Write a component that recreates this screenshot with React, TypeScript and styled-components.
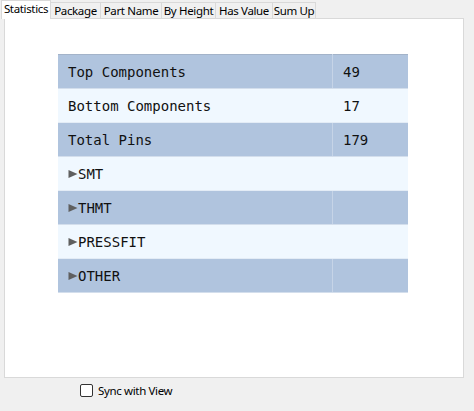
import React from "react";
import styled, { createGlobalStyle } from "styled-components";

const GlobalStyle = createGlobalStyle`
  html, body {
    margin: 0;
    padding: 0;
    background: #f0f0f0;
  }
`;

type Stat = { label: string; value?: string; group?: boolean };

const stats: Stat[] = [
    { label: "Top Components", value: "49" },
    { label: "Bottom Components", value: "17" },
    { label: "Total Pins", value: "179" },
    { label: "SMT", group: true },
    { label: "THMT", group: true },
    { label: "PRESSFIT", group: true },
    { label: "OTHER", group: true },
];

const tabs = [
    { name: "Statistics", width: 50 },
    { name: "Package", width: 51 },
    { name: "Part Name", width: 62 },
    { name: "By Height", width: 55 },
    { name: "Has Value", width: 58 },
    { name: "Sum Up", width: 44 },
];

const Style = {
    Window: styled.div`
        width: 474px;
        height: 411px;
        display: flex;
        flex-direction: column;
        background: #f0f0f0;
        font-family: "Noto Sans", "Liberation Sans", sans-serif;
        color: #000;
        overflow: hidden;
    `,
    TabStrip: styled.div`
        height: 18px;
        display: flex;
        align-items: flex-end;
        padding-left: 2px;
        position: relative;
        z-index: 1;
    `,
    Tab: styled.div<{ $active?: boolean; $width: number }>`
        box-sizing: border-box;
        width: ${({ $width }) => $width}px;
        height: ${({ $active }) => ($active ? "19px" : "16px")};
        margin-bottom: ${({ $active }) => ($active ? "-1px" : "0")};
        display: flex;
        align-items: center;
        justify-content: center;
        font-size: 11.5px;
        letter-spacing: -0.35px;
        white-space: nowrap;
        background: ${({ $active }) => ($active ? "#ffffff" : "#f0f0f0")};
        border: 1px solid #d9d9d9;
        border-bottom: none;
        margin-left: -1px;
        padding-bottom: ${({ $active }) => ($active ? "3px" : "0")};
    `,
    Panel: styled.div`
        box-sizing: border-box;
        height: 360px;
        margin: 0 10px 0 4px;
        background: #ffffff;
        border: 1px solid #d9d9d9;
        padding: 35px 0 0 53px;
    `,
    Table: styled.table`
        border-collapse: collapse;
        width: 350px;
        font-family: "DejaVu Sans Mono", "Liberation Mono", monospace;
        font-size: 14px;
        color: #111;
        border-top: 1px solid #a3b3c9;
        border-bottom: 1px solid #a3b3c9;
    `,
    Row: styled.tr<{ $dark: boolean }>`
        height: 34px;
        background: ${({ $dark }) => ($dark ? "#b0c4de" : "#f0f8ff")};
        & > td {
            border-bottom: 1px solid ${({ $dark }) => ($dark ? "#d3deec" : "#e3ecf6")};
        }
        & > td:first-child {
            border-right: 1px solid ${({ $dark }) => ($dark ? "#c6d4e7" : "#f0f8ff")};
        }
    `,
    LabelCell: styled.td`
        width: 264px;
        padding: 0 0 0 10px;
    `,
    ValueCell: styled.td`
        padding: 0 0 0 10px;
    `,
    Arrow: styled.svg`
        width: 10px;
        height: 10px;
        vertical-align: -0.5px;
    `,
    Footer: styled.div`
        flex: 1;
        display: flex;
        align-items: flex-start;
        padding: 6px 0 0 80px;
        gap: 5px;
        font-size: 11.5px;
        letter-spacing: -0.35px;
        line-height: 13px;
    `,
    Check: styled.span`
        box-sizing: border-box;
        width: 13px;
        height: 13px;
        border: 1px solid #333;
        border-radius: 2px;
        background: #fff;
    `,
};

export default function App() {
    return (
        <>
            <GlobalStyle />
            <Style.Window>
                {/* tabs */}
                <Style.TabStrip>
                    {tabs.map((t, i) => (
                        <Style.Tab key={t.name} $active={i === 0} $width={t.width}>
                            {t.name}
                        </Style.Tab>
                    ))}
                </Style.TabStrip>

                {/* statistics table */}
                <Style.Panel>
                    <Style.Table>
                        <tbody>
                            {stats.map((s, i) => (
                                <Style.Row key={s.label} $dark={i % 2 === 0}>
                                    <Style.LabelCell>
                                        {s.group && (
                                            <Style.Arrow viewBox="0 0 10 10">
                                                <polygon points="0.5,1 9.5,5 0.5,9" fill="#5f5f5f" />
                                            </Style.Arrow>
                                        )}
                                        {s.label}
                                    </Style.LabelCell>
                                    <Style.ValueCell>{s.value}</Style.ValueCell>
                                </Style.Row>
                            ))}
                        </tbody>
                    </Style.Table>
                </Style.Panel>

                {/* footer */}
                <Style.Footer>
                    <Style.Check />
                    Sync with View
                </Style.Footer>
            </Style.Window>
        </>
    );
}
